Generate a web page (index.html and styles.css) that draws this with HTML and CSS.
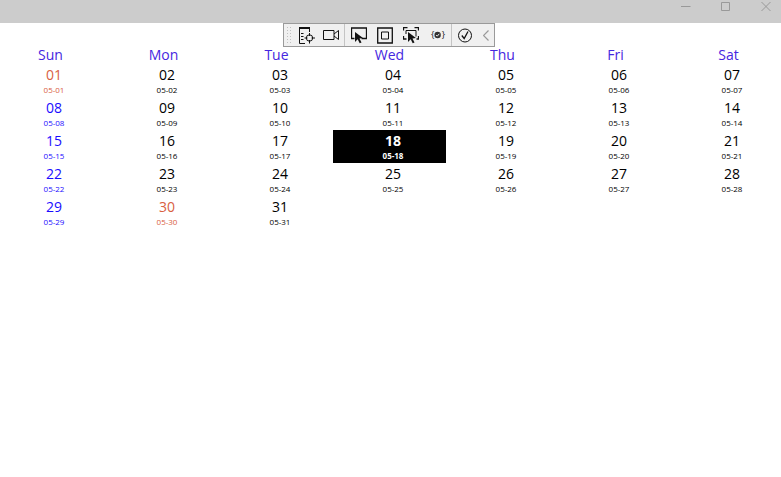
FILE: index.html
```html
<!DOCTYPE html>
<html lang="en">
<head>
<meta charset="utf-8">
<title>Calendar</title>
<link rel="stylesheet" href="styles.css">
</head>
<body>
<header class="titlebar">
  <svg class="win-btn" width="10" height="9" viewBox="0 0 10 9"><path d="M0 4.500h9.500" /></svg>
  <svg class="win-btn" width="10" height="9" viewBox="0 0 10 9"><path d="M.5.500h8v8h-8z" /></svg>
  <svg class="win-btn" width="10" height="9" viewBox="0 0 10 9"><path d="M.5 0l9 9M9.500 0l-9 9" /></svg>
</header>
<div class="toolbar">
  <span class="grip"></span>
  <svg class="ico doc" width="16" height="17" viewBox="0 0 16 17"><path class="thick" d="M0 1h11" /><path d="M.5 1v15.500h5.500M10.500 1v4" /><path d="M2 6.500h2.500M2 9.500h2.500M2 12.500h2.500" /><circle cx="10.500" cy="11" r="3.200" /><path d="M10.500 6v3M10.500 13v3.500M5.500 11h3M12.500 11h3.500" /></svg>
  <svg class="ico cam" width="16" height="17" viewBox="0 0 16 17"><path d="M.5 3.500h10.500v9h-10.500z" /><path d="M11 7l4.500-3.500v9l-4.500-3.500" /></svg>
  <span class="sep"></span>
  <svg class="ico cursor" width="16" height="17" viewBox="0 0 16 17"><path class="mid" d="M3.500 11.500h-3v-10.500h15v10.500h-5" /><path class="fill" d="M4 5l8 6-3.500.5 2 4-1.800.8-2-4-2.700 2.700z" /></svg>
  <svg class="ico square" width="16" height="17" viewBox="0 0 16 17"><path class="mid" d="M.7 1h14.600v15h-14.600z" /><path d="M4.500 5h7v7h-7z" /></svg>
  <svg class="ico dotted" width="16" height="17" viewBox="0 0 16 17"><path d="M3 7v-3.500h10v6" /><path class="mid" d="M.5 3.500v-3h4M11.500.5h4v3M.5 9v3h3M15.500 9v3h-2" /><path class="fill" d="M5 5l8 6-3.500.5 2 4-1.800.8-2-4-2.700 2.700z" /></svg>
  <span class="code-ico">{<svg width="8" height="8" viewBox="0 0 8 8"><circle cx="4" cy="4" r="3.500" fill="#333" /><path d="M2.300 4l1.300 1.300 2.200-2.600" fill="none" stroke="#fff" /></svg>}</span>
  <span class="sep sep-right"></span>
  <svg class="ico check" width="14" height="17" viewBox="0 0 14 17"><circle cx="7" cy="8.500" r="6.500" /><path class="mid" d="M3.800 8.500l2.400 3 3.800-7" /></svg>
  <svg class="chev" width="6" height="11" viewBox="0 0 6 11"><path d="M5.500.5l-5 5 5 5" /></svg>
</div>
<main class="calendar">
  <div class="head">Sun</div><div class="head">Mon</div><div class="head">Tue</div><div class="head">Wed</div><div class="head">Thu</div><div class="head">Fri</div><div class="head">Sat</div>
  <div class="cell holiday"><b>01</b><small>05-01</small></div>
  <div class="cell"><b>02</b><small>05-02</small></div>
  <div class="cell"><b>03</b><small>05-03</small></div>
  <div class="cell"><b>04</b><small>05-04</small></div>
  <div class="cell"><b>05</b><small>05-05</small></div>
  <div class="cell"><b>06</b><small>05-06</small></div>
  <div class="cell"><b>07</b><small>05-07</small></div>
  <div class="cell sunday"><b>08</b><small>05-08</small></div>
  <div class="cell"><b>09</b><small>05-09</small></div>
  <div class="cell"><b>10</b><small>05-10</small></div>
  <div class="cell"><b>11</b><small>05-11</small></div>
  <div class="cell"><b>12</b><small>05-12</small></div>
  <div class="cell"><b>13</b><small>05-13</small></div>
  <div class="cell"><b>14</b><small>05-14</small></div>
  <div class="cell sunday"><b>15</b><small>05-15</small></div>
  <div class="cell"><b>16</b><small>05-16</small></div>
  <div class="cell"><b>17</b><small>05-17</small></div>
  <div class="cell today"><b>18</b><small>05-18</small></div>
  <div class="cell"><b>19</b><small>05-19</small></div>
  <div class="cell"><b>20</b><small>05-20</small></div>
  <div class="cell"><b>21</b><small>05-21</small></div>
  <div class="cell sunday"><b>22</b><small>05-22</small></div>
  <div class="cell"><b>23</b><small>05-23</small></div>
  <div class="cell"><b>24</b><small>05-24</small></div>
  <div class="cell"><b>25</b><small>05-25</small></div>
  <div class="cell"><b>26</b><small>05-26</small></div>
  <div class="cell"><b>27</b><small>05-27</small></div>
  <div class="cell"><b>28</b><small>05-28</small></div>
  <div class="cell sunday"><b>29</b><small>05-29</small></div>
  <div class="cell holiday"><b>30</b><small>05-30</small></div>
  <div class="cell"><b>31</b><small>05-31</small></div>
</main>
</body>
</html>
```
FILE: styles.css
```css
html, body {
  margin: 0;
  height: 100%;
  overflow: hidden;
  background: #fff;
  font-family: "Open Sans", "Noto Sans", sans-serif;
}
.titlebar {
  height: 23px;
  background: #cccccc;
  display: flex;
  justify-content: flex-end;
  gap: 30px;
  padding: 2px 10px 0 0;
  align-items: flex-start;
  box-sizing: border-box;
}
.win-btn {
  fill: none;
  stroke: #999;
  stroke-width: 1;
}
.toolbar {
  position: absolute;
  left: 283px;
  top: 23px;
  width: 212px;
  height: 24px;
  box-sizing: border-box;
  border: 1px solid #9a9a9a;
  background: #f0f0f0;
  display: flex;
  align-items: center;
  padding: 0 0 0 2px;
}
.grip {
  width: 7px;
  height: 18px;
  background-image: radial-gradient(#c0c0c0 0.7px, transparent 0.8px);
  background-size: 3px 3px;
}
.ico {
  flex: none;
  fill: none;
  stroke: #111;
  stroke-width: 1;
}
.ico .fill { fill: #111; stroke: none; }
.ico .thick { stroke-width: 2; }
.ico .mid { stroke-width: 1.300; }
.doc { margin-left: 6px; }
.cam { margin-left: 8px; }
.cursor { margin-left: 6px; }
.square, .dotted { margin-left: 10px; }
.check { margin-left: 6px; }
.sep {
  flex: none;
  width: 1px;
  height: 22px;
  margin-left: 5px;
  background: #c4c4c4;
}
.sep.sep-right { margin-left: 6px; }
.code-ico {
  flex: none;
  display: flex;
  align-items: center;
  justify-content: center;
  margin-left: 12px;
  width: 14px;
  font-size: 9px;
  line-height: 12px;
  color: #222;
}
.chev {
  flex: none;
  margin-left: 11px;
  fill: none;
  stroke: #999;
  stroke-width: 1.200;
}
.calendar {
  display: grid;
  grid-template-columns: repeat(7, 113px);
  grid-auto-rows: 33px;
  grid-template-rows: 41px;
  margin-left: -6px;
}
.head {
  font-size: 14px;
  color: #4527e0;
  text-align: center;
  padding-top: 22px;
  line-height: 19px;
  box-sizing: border-box;
}
.cell {
  display: flex;
  flex-direction: column;
  align-items: center;
  padding-left: 7px;
  color: #000;
}
.cell b {
  font-weight: 400;
  font-size: 14px;
  line-height: 21px;
}
.cell small {
  font-size: 8px;
  line-height: 10px;
}
.sunday { color: #1a0dff; }
.holiday { color: #d9603f; }
.today { background: #000; color: #fff; }
.today b, .today small { font-weight: 700; }
```
